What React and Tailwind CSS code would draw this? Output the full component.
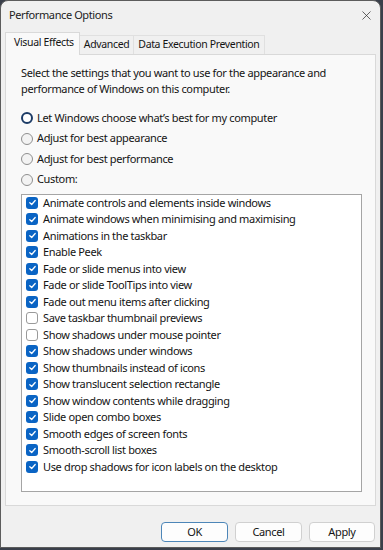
import { X } from 'lucide-react';

const effects = [
  ['Animate controls and elements inside windows', true],
  ['Animate windows when minimising and maximising', true],
  ['Animations in the taskbar', true],
  ['Enable Peek', true],
  ['Fade or slide menus into view', true],
  ['Fade or slide ToolTips into view', true],
  ['Fade out menu items after clicking', true],
  ['Save taskbar thumbnail previews', false],
  ['Show shadows under mouse pointer', false],
  ['Show shadows under windows', true],
  ['Show thumbnails instead of icons', true],
  ['Show translucent selection rectangle', true],
  ['Show window contents while dragging', true],
  ['Slide open combo boxes', true],
  ['Smooth edges of screen fonts', true],
  ['Smooth-scroll list boxes', true],
  ['Use drop shadows for icon labels on the desktop', true],
];

const radios = [
  'Let Windows choose what\u2019s best for my computer',
  'Adjust for best appearance',
  'Adjust for best performance',
  'Custom:',
];

function Radio({ focused }) {
  return focused ? (
    <span className="w-[12px] h-[12px] rounded-full border-[2px] border-[#1c3b66] bg-white shrink-0" />
  ) : (
    <span className="w-[12px] h-[12px] rounded-full border border-[#8f8f8f] bg-[#f3f3f3] shrink-0" />
  );
}

function Check({ checked }) {
  if (!checked) {
    return <span className="w-[12px] h-[12px] rounded-[3px] border border-[#9a9a9a] bg-white shrink-0" />;
  }
  return (
    <span className="w-[12px] h-[12px] rounded-[3px] bg-[#0a64c4] shrink-0 flex items-center justify-center">
      <svg width="9" height="9" viewBox="0 0 10 10" fill="none">
        <path d="M2 5.2 L4.1 7.2 L8 2.8" stroke="white" strokeWidth="1.4" strokeLinecap="round" strokeLinejoin="round" />
      </svg>
    </span>
  );
}

export default function App() {
  return (
    <div
      className="w-[383px] h-[550px] bg-[#3a3f4a] overflow-hidden tracking-[-0.35px]"
      style={{ fontFamily: '"Noto Sans", "Open Sans", sans-serif' }}
    >
      <div className="w-[381px] h-[548px] rounded-t-[8px] bg-[#f0f0f0] border border-[#5c5c5c] text-[#141414] flex flex-col">
        {/* Title bar */}
        <div className="h-[29px] flex items-center justify-between pl-[8px] pr-[6px] text-[11px] tracking-[-0.4px]">
          <span className="text-[#222]">Performance Options</span>
          <X className="w-[15px] h-[15px] text-[#333]" strokeWidth={1.2} />
        </div>

        {/* Tabs */}
        <div className="flex items-end pl-[4px] h-[24px] text-[10.5px]">
          <div className="h-[23px] pl-[8px] pr-[5px] flex items-center bg-[#f9f9f9] border border-b-0 border-[#d9d9d9] relative z-10 -mb-px pb-[2px]">
            Visual Effects
          </div>
          <div className="h-[19px] px-[4px] flex items-center bg-[#f0f0f0] border border-b-0 border-l-0 border-[#e0e0e0]">
            Advanced
          </div>
          <div className="h-[19px] px-[4px] flex items-center bg-[#f0f0f0] border border-b-0 border-l-0 border-[#e0e0e0]">
            Data Execution Prevention
          </div>
        </div>

        {/* Panel */}
        <div className="mx-[4px] h-[452px] bg-[#f9f9f9] border border-[#d9d9d9] px-[15px] pt-[10px] text-[11px]">
          <p className="leading-[16px]">
            Select the settings that you want to use for the appearance and performance of Windows on this computer.
          </p>
          <div className="mt-[13px] flex flex-col gap-[4.5px]">
            {radios.map((r, i) => (
              <div key={r} className="flex items-center gap-[4px] h-[16px]">
                <Radio focused={i === 0} />
                <span>{r}</span>
              </div>
            ))}
          </div>
          <div className="mt-[6px] w-[341px] h-[298px] bg-white border border-[#a5a5a5] pl-[4px]">
            {effects.map(([label, on]) => (
              <div key={label} className="flex items-center gap-[5px] h-[16.5px]">
                <Check checked={on} />
                <span>{label}</span>
              </div>
            ))}
          </div>
        </div>

        {/* Buttons */}
        <div className="flex justify-end gap-[7px] pr-[5px] pt-[16px] text-[11px]">
          <button className="w-[67px] h-[20px] rounded-[4px] border border-[#4d86b8] bg-[#fdfdfd]">OK</button>
          <button className="w-[67px] h-[20px] rounded-[4px] border border-[#d0d0d0] bg-[#fdfdfd]">Cancel</button>
          <button className="w-[66px] h-[20px] rounded-[4px] border border-[#d0d0d0] bg-[#fdfdfd]">Apply</button>
        </div>
      </div>
    </div>
  );
}
